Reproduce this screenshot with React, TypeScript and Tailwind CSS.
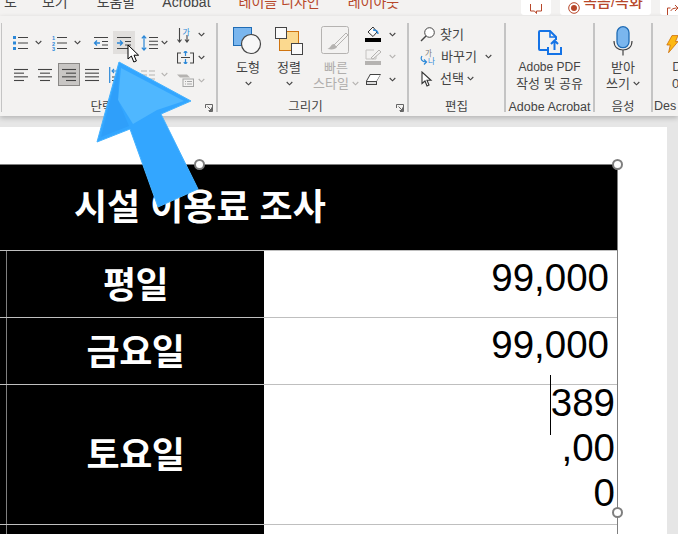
import type { ReactNode } from 'react';

const KR = "font-['Liberation_Sans','Noto_Sans_CJK_KR',sans-serif]";

const Chevron = ({ dim = false, className = '' }: { dim?: boolean; className?: string }) => (
    <svg width="7" height="5" viewBox="0 0 7 5" className={`shrink-0 ${className}`}>
        <path d="M.7 1l2.8 2.8L6.3 1" fill="none" stroke={dim ? '#b5b3b1' : '#444'} strokeWidth="1.1" />
    </svg>
);

const Lines = ({ rows, color = '#444' }: { rows: [number, number][]; color?: string }) => {
    const step = 11 / Math.max(rows.length - 1, 1);
    return (
        <>
            {rows.map(([a, b], i) => (
                <path key={i} d={`M${a} ${2.5 + i * step}H${b}`} stroke={color} strokeWidth="1.1" />
            ))}
        </>
    );
};

const Icon16 = ({ w = 16, children }: { w?: number; children: ReactNode }) => (
    <svg width={w} height="16" viewBox={`0 0 ${w} 16`} className="shrink-0">
        {children}
    </svg>
);

const Bullets = () => (
    <Icon16>
        <rect x="0" y="1" width="3" height="3" fill="#2b88d8" />
        <rect x="0" y="6.5" width="3" height="3" fill="#2b88d8" />
        <rect x="0" y="12" width="3" height="3" fill="#2b88d8" />
        <path d="M5 2.5h10M5 8h10M5 13.5h10" stroke="#444" strokeWidth="1.1" />
    </Icon16>
);

const Numbered = () => (
    <Icon16>
        <text x="0" y="5" fontSize="5.5" fontWeight="700" fill="#2b88d8" fontFamily="Liberation Sans">1</text>
        <text x="0" y="10.5" fontSize="5.5" fontWeight="700" fill="#2b88d8" fontFamily="Liberation Sans">2</text>
        <text x="0" y="16" fontSize="5.5" fontWeight="700" fill="#2b88d8" fontFamily="Liberation Sans">3</text>
        <path d="M5 2.5h10M5 8h10M5 13.5h10" stroke="#444" strokeWidth="1.1" />
    </Icon16>
);

const Outdent = () => (
    <Icon16>
        <path d="M1 2.5h14M9 6.5h6M9 10h6M1 13.5h14" stroke="#444" strokeWidth="1.1" />
        <path d="M7 8H1.5M4 5.5L1.5 8 4 10.5" fill="none" stroke="#2b88d8" strokeWidth="1.3" />
    </Icon16>
);

const Indent = () => (
    <Icon16>
        <path d="M1 2.5h14M9 6.5h6M9 10h6M1 13.5h14" stroke="#444" strokeWidth="1.1" />
        <path d="M1 8h5.5M4 5.5L6.5 8 4 10.5" fill="none" stroke="#2b88d8" strokeWidth="1.3" />
    </Icon16>
);

const LineSpacing = () => (
    <Icon16 w={18}>
        <path d="M3 1v14M.8 3.4L3 1l2.2 2.4M.8 12.6L3 15l2.2-2.4" fill="none" stroke="#2b88d8" strokeWidth="1.2" />
        <path d="M8 2.5h9M8 6.2h9M8 9.8h9M8 13.5h9" stroke="#444" strokeWidth="1.1" />
    </Icon16>
);

const Align = ({ rows }: { rows: [number, number][] }) => (
    <Icon16 w={15}>
        <Lines rows={rows} />
    </Icon16>
);

const Distribute = () => (
    <Icon16>
        <path d="M.7 0v16" stroke="#2b88d8" strokeWidth="1.2" />
        <path d="M8 4H3M5 2L3 4l2 2" fill="none" stroke="#2b88d8" strokeWidth="1.1" />
        <path d="M9 2.5h7M9 6h7M3 10h13M3 13.5h13" stroke="#444" strokeWidth="1.1" />
    </Icon16>
);

const Columns = () => (
    <svg width="14" height="10" viewBox="0 0 14 10" className="shrink-0">
        <path d="M0 1h6M8 1h6M0 5h6M8 5h6M0 9h6M8 9h6" stroke="#b5b3b1" strokeWidth="1.2" />
    </svg>
);

const TextDirection = () => (
    <svg width="16" height="16" viewBox="0 0 16 16" className="shrink-0">
        <path d="M2.5 1v14M.5 12.5l2 2.5 2-2.5M10 8v7M8 12.5l2 2.5 2-2.5" fill="none" stroke="#444" strokeWidth="1.1" />
        <text x="5.5" y="7.5" fontSize="8" fill="#2b88d8" fontFamily="Noto Sans CJK KR">가</text>
    </svg>
);

const AlignText = () => (
    <svg width="17" height="13" viewBox="0 0 17 13" className="shrink-0">
        <path d="M4 2H.5v10H4M13 2h3.5v10H13" fill="none" stroke="#444" strokeWidth="1.1" />
        <path d="M4 6.5h9" stroke="#444" strokeWidth="1" />
        <path d="M8.5 0v5M6.8 1.8L8.5 0l1.7 1.8M8.5 13V8M6.8 11.2L8.5 13l1.7-1.8" fill="none" stroke="#2b88d8" strokeWidth="1.2" />
    </svg>
);

const SmartArt = () => (
    <svg width="17" height="13" viewBox="0 0 17 13" className="shrink-0">
        <path d="M0 .5h10l3 3H3z" fill="#b5b3b1" />
        <rect x="6" y="5" width="10.5" height="7.5" fill="#f3f2f1" stroke="#a6a6a6" />
        <path d="M8 7.5h1M10 7.5h5M8 10h1M10 10h5" stroke="#a6a6a6" />
    </svg>
);

const ShapeIcon = () => (
    <svg width="30" height="29" viewBox="0 0 30 29">
        <rect x=".5" y=".5" width="18" height="18" fill="#7ab6ee" stroke="#1f6cb5" />
        <circle cx="18" cy="17" r="9.5" fill="#f7f7f7" stroke="#444" strokeWidth="1.2" />
    </svg>
);

const ArrangeIcon = () => (
    <svg width="29" height="29" viewBox="0 0 29 29">
        <rect x="4.5" y="4.5" width="19" height="19" fill="#fbd98f" stroke="#d0740f" />
        <rect x=".5" y=".5" width="11" height="11" fill="#fafafa" stroke="#444" />
        <rect x="16.5" y="16.5" width="11" height="11" fill="#fafafa" stroke="#444" />
    </svg>
);

const QuickStyleIcon = () => (
    <svg width="30" height="30" viewBox="0 0 30 30">
        <rect x=".5" y=".5" width="27" height="27" rx="2" fill="#f3f2f1" stroke="#b5b3b1" />
        <path d="M27 9L15 21l-2-2L25 7z" fill="#f3f2f1" stroke="#b5b3b1" />
        <path d="M13 18c-3 0-3 3-5 4-1 .6-2 1-1 1 4 1 8 0 9-2z" fill="#b5b3b1" />
    </svg>
);

const FillIcon = () => (
    <svg width="17" height="15" viewBox="0 0 17 15">
        <path d="M3 5l5-5 4 5-4 4.5z" fill="#fafafa" stroke="#333" />
        <path d="M13 7c0-3-2-4-5-4" fill="none" stroke="#2b88d8" strokeWidth="1.4" />
        <rect x="0" y="11" width="16" height="4" fill="#000" />
    </svg>
);

const PenIcon = () => (
    <svg width="17" height="16" viewBox="0 0 17 16">
        <path d="M1 1h8M1 1v9h10V6" fill="none" stroke="#c4c2c0" />
        <path d="M6 9l8-8 2 2-8 7z" fill="#f3f2f1" stroke="#b5b3b1" />
        <rect x="0" y="12" width="16" height="4" fill="#b5b3b1" />
    </svg>
);

const EffectIcon = () => (
    <svg width="17" height="13" viewBox="0 0 17 13">
        <path d="M1 8l4-7h11l-4 7v4H1z" fill="#444" />
        <path d="M2 8l3.5-6H15l-3.5 6z" fill="#fff" />
        <path d="M2 9h9v2H2z" fill="#ddd" />
    </svg>
);

const FindIcon = () => (
    <svg width="15" height="15" viewBox="0 0 15 15">
        <circle cx="9.5" cy="5.5" r="4.8" fill="#fff" stroke="#444" />
        <path d="M6 9L1 14" stroke="#444" strokeWidth="1.4" />
    </svg>
);

const ReplaceIcon = () => (
    <svg width="16" height="17" viewBox="0 0 16 17">
        <path d="M2 8c-2 3 0 6 4 6M4 11.5L6.5 14 4 16.5" fill="none" stroke="#2b88d8" strokeWidth="1.2" />
        <text x="5" y="7.5" fontSize="7.5" fill="#777" fontFamily="Noto Sans CJK KR">가</text>
        <text x="8" y="15.5" fontSize="7.5" fill="#2b88d8" fontFamily="Noto Sans CJK KR">나</text>
    </svg>
);

const SelectIcon = () => (
    <svg width="12" height="16" viewBox="0 0 12 16">
        <path d="M1 1v11.5l3-2.5 2 5 2-1-2-4.7h4z" fill="#fff" stroke="#333" strokeWidth="1.1" />
    </svg>
);

const PdfIcon = () => (
    <svg width="24" height="26" viewBox="0 0 24 26">
        <path d="M9 20H2a1 1 0 0 1-1-1V2a1 1 0 0 1 1-1h10l6 6v3" fill="none" stroke="#1473e6" strokeWidth="2" />
        <path d="M12 1v6h6" fill="none" stroke="#1473e6" strokeWidth="1.6" />
        <path d="M10 17v7h13v-7" fill="none" stroke="#1473e6" strokeWidth="2" />
        <path d="M16.5 20v-9M13 14l3.5-3.5L20 14" fill="none" stroke="#1473e6" strokeWidth="2" />
    </svg>
);

const MicIcon = () => (
    <svg width="20" height="30" viewBox="0 0 20 30">
        <rect x="4" y=".7" width="12" height="21" rx="6" fill="#7ab6ee" stroke="#1f6cb5" strokeWidth="1.3" />
        <path d="M1 15c0 6 4 9 9 9s9-3 9-9M10 24v5.5" fill="none" stroke="#444" strokeWidth="1.2" />
    </svg>
);

const BoltIcon = () => (
    <svg width="14" height="22" viewBox="0 0 14 22">
        <path d="M7 0h7l-3 7h3L3 20l2-9H1z" fill="#fdb913" stroke="#d0740f" strokeWidth="1" />
    </svg>
);

const Launcher = () => (
    <svg width="8" height="8" viewBox="0 0 8 8" className="shrink-0">
        <path d="M.5 4V.5h7v7H4M2.5 2.5l4 4M6.5 3.5v3h-3" fill="none" stroke="#555" strokeWidth=".9" />
    </svg>
);

const Group = ({ width, label, launcher, children }: { width: string; label: string; launcher?: boolean; children: ReactNode }) => (
    <div className={`flex h-[89px] flex-col border-r-2 border-[#c4c4c4] ${width}`}>
        <div className="min-h-0 flex-1">{children}</div>
        <div className={`relative flex h-[10px] shrink-0 items-center justify-center text-[12.5px] leading-none text-[#444] ${launcher ? 'pr-[14px]' : ''}`}>
            <span>{label}</span>
            {launcher && (
                <span className="absolute right-[3px] top-[2px]">
                    <Launcher />
                </span>
            )}
        </div>
    </div>
);

const StackTool = ({ icon, lines, dim = false, width }: { icon: ReactNode; lines: ReactNode[]; dim?: boolean; width: string }) => (
    <div className={`flex flex-col items-center ${width} ${dim ? 'text-[#b0aeac]' : 'text-[#444]'}`}>
        <div className="mb-[3px] flex h-[33px] items-end">{icon}</div>
        {lines.map((l, i) => (
            <div key={i} className="flex h-[16px] items-center gap-[3px] whitespace-nowrap text-[13px] leading-none">
                {l}
            </div>
        ))}
    </div>
);

const Handle = ({ className }: { className: string }) => (
    <div className={`absolute h-[11px] w-[11px] rounded-full border-2 border-[#7f7f7f] bg-white ${className}`} />
);

export default function App() {
    return (
        <div className={`relative h-[534px] w-[678px] overflow-hidden bg-[#e6e6e6] ${KR}`}>
            {/* clipped tab row */}
            <div className="flex h-[16px] items-start overflow-hidden bg-[#f3f2f1] text-[14px] leading-none text-[#444]">
                <div className="flex h-[9px] items-end whitespace-nowrap">
                    <span className="ml-[4px]">토</span>
                    <span className="ml-[25px]">보기</span>
                    <span className="ml-[29px]">도움말</span>
                    <span className="ml-[27px]">Acrobat</span>
                    <span className="ml-[28px] text-[#b7472a]">테이블 디자인</span>
                    <span className="ml-[28px] text-[#b7472a]">레이아웃</span>
                </div>
                <div className="ml-auto flex h-[15px] gap-[9px]">
                    <div className="flex h-[15px] w-[30px] items-end justify-center rounded-b-[3px] bg-white pb-[1px]">
                        <svg width="12" height="10" viewBox="0 0 12 10">
                            <path d="M.5 0v7h4l2 2.5V7h5V0" fill="none" stroke="#b7472a" />
                        </svg>
                    </div>
                    <div className="flex h-[15px] w-[91px] items-start justify-center gap-[3px] rounded-b-[3px] bg-white text-[#b7472a]">
                        <svg width="12" height="12" viewBox="0 0 12 12" className="mt-[2px]">
                            <circle cx="6" cy="6" r="5.3" fill="none" stroke="#b7472a" />
                            <circle cx="6" cy="6" r="3" fill="#b7472a" />
                        </svg>
                        <span className="flex h-[9px] items-end whitespace-nowrap text-[15px] font-medium">녹음/녹화</span>
                    </div>
                    <div className="flex h-[15px] w-[18px] items-end rounded-bl-[3px] bg-white pl-[7px]">
                        <svg width="11" height="10" viewBox="0 0 11 10">
                            <path d="M.5 10V3h3M8 0l3 3-3 3M4 6c0-2 3-3 7-3" fill="none" stroke="#b7472a" />
                        </svg>
                    </div>
                </div>
            </div>

            {/* ribbon */}
            <div className="flex h-[100px] items-start bg-[#f3f2f1] pt-[7px] shadow-[0_2px_5px_rgba(0,0,0,0.22)]">
                <div className="ml-[1px] h-[89px] w-[1px] shrink-0 bg-[#c4c4c4]" />
                <Group width="w-[216px] shrink-0" label="단락" launcher>
                    <div className="flex">
                        <div className="flex w-[173px] shrink-0 flex-col gap-[9px] pt-[8px]">
                            <div className="flex h-[23px] items-center pl-[11px]">
                                <Bullets />
                                <Chevron className="ml-[6px]" />
                                <span className="ml-[10px]"><Numbered /></span>
                                <Chevron className="ml-[6px]" />
                                <span className="ml-[12px]"><Outdent /></span>
                                <span className="ml-[4px] flex h-[23px] w-[22px] items-center justify-center bg-[#e1dfdd]"><Indent /></span>
                                <span className="ml-[6px]"><LineSpacing /></span>
                                <Chevron className="ml-[2px]" />
                            </div>
                            <div className="flex h-[23px] items-center pl-[12px]">
                                <Align rows={[[0, 14], [0, 10], [0, 14], [0, 10]]} />
                                <span className="ml-[9px]"><Align rows={[[0, 14], [2, 12], [0, 14], [2, 12]]} /></span>
                                <span className="ml-[5px] flex h-[23px] w-[22px] items-center justify-center border border-[#8a8886] bg-[#c8c6c4]">
                                    <Align rows={[[0, 14], [4, 14], [0, 14], [4, 14]]} />
                                </span>
                                <span className="ml-[5px]"><Align rows={[[0, 14], [0, 14], [0, 14], [0, 14]]} /></span>
                                <span className="ml-[9px]"><Distribute /></span>
                                <span className="ml-[16px]"><Columns /></span>
                                <Chevron dim className="ml-[6px]" />
                            </div>
                        </div>
                        <div className="flex flex-col pl-[2px]">
                            <div className="flex h-[23px] items-center gap-[5px]"><TextDirection /><Chevron /></div>
                            <div className="flex h-[23px] items-center gap-[4px]"><AlignText /><Chevron /></div>
                            <div className="flex h-[23px] items-center gap-[4px]"><SmartArt /><Chevron dim /></div>
                        </div>
                    </div>
                </Group>

                <Group width="w-[191px] shrink-0" label="그리기" launcher>
                    <div className="flex pl-[14px]">
                        <StackTool width="w-[32px]" icon={<ShapeIcon />} lines={['도형', <Chevron key="c" />]} />
                        <StackTool width="w-[32px] ml-[9px]" icon={<ArrangeIcon />} lines={['정렬', <Chevron key="c" />]} />
                        <StackTool
                            width="w-[44px] ml-[9px]"
                            dim
                            icon={<QuickStyleIcon />}
                            lines={['빠른', <><span key="t">스타일</span><Chevron dim key="c" /></>]}
                        />
                        <div className="ml-[7px] flex flex-col">
                            <div className="flex h-[22px] items-center gap-[7px]"><FillIcon /><Chevron /></div>
                            <div className="flex h-[23px] items-center gap-[7px]"><PenIcon /><Chevron dim /></div>
                            <div className="flex h-[23px] items-center gap-[7px]"><EffectIcon /><Chevron /></div>
                        </div>
                    </div>
                </Group>

                <Group width="w-[97px] shrink-0" label="편집">
                    <div className="flex flex-col pl-[11px] text-[13px] leading-none text-[#444]">
                        <div className="flex h-[22px] items-center gap-[5px]"><FindIcon /><span>찾기</span></div>
                        <div className="flex h-[22px] items-center gap-[5px]"><ReplaceIcon /><span>바꾸기</span><Chevron className="ml-[3px]" /></div>
                        <div className="flex h-[23px] items-center gap-[7px] pl-[1px]"><SelectIcon /><span>선택</span><Chevron className="-ml-[4px]" /></div>
                    </div>
                </Group>

                <Group width="w-[89px] shrink-0" label="Adobe Acrobat">
                    <StackTool width="w-full" icon={<PdfIcon />} lines={[<span key="a" className="text-[12px]">Adobe PDF</span>, '작성 및 공유']} />
                </Group>

                <Group width="w-[58px] shrink-0" label="음성">
                    <StackTool width="w-full" icon={<MicIcon />} lines={['받아', <><span key="t">쓰기</span><Chevron key="c" /></>]} />
                </Group>

                <div className="flex h-[89px] flex-col overflow-hidden pl-[13px] text-[13px] leading-none text-[#444]">
                    <div className="mb-[3px] flex h-[33px] items-end"><BoltIcon /></div>
                    <div className="flex h-[16px] items-center pl-[6px]">디</div>
                    <div className="flex h-[16px] items-center pl-[6px]">0</div>
                    <div className="-ml-[13px] flex h-[21px] items-end pl-[1px] text-[12.5px]">Des</div>
                </div>
            </div>

            {/* slide */}
            <div className="pr-[11px] pt-[11px]">
                <div className="h-[420px] overflow-hidden bg-white pt-[37px]">
                    <div className="w-[618px] border-r border-t border-[#7f7f7f] text-white">
                        <div className="flex h-[85px] items-center bg-black pl-[74px] text-[36px] leading-none font-bold">
                            시설 이용료 조사
                        </div>
                        <Row h="h-[67px]" label="평일" value={<div className="pr-[8px]">99,000</div>} />
                        <Row h="h-[67px]" label="금요일" value={<div className="pr-[8px]">99,000</div>} />
                        <Row
                            h="h-[140px]"
                            label="토요일"
                            value={
                                <div className="mb-[4px] pr-[2px] leading-[45px]">
                                    <div>389</div>
                                    <div>,00</div>
                                    <div>0</div>
                                </div>
                            }
                        />
                        <Row h="h-[40px]" label="" value={null} />
                    </div>
                </div>
            </div>

            {/* selection overlays */}
            <Handle className="left-[194px] top-[159px]" />
            <Handle className="left-[612px] top-[159px]" />
            <Handle className="left-[612px] top-[507px]" />
            <div className="absolute left-[550px] top-[375px] h-[60px] w-[1px] bg-black" />

            {/* big callout arrow */}
            <svg width="678" height="534" viewBox="0 0 678 534" className="absolute left-0 top-0">
                <polygon points="119,62 191,101 161,114 198,189 158,207 130,129 97,142" fill="#33a6ff" stroke="#45b2ff" strokeWidth="1" />
                <polygon points="121,68 184,101 157,110 133,124 118,100" fill="#4fb7ff" />
                <polygon points="119,66 101,137 129,126 118,100" fill="#2f9ffa" />
            </svg>

            {/* mouse pointer */}
            <svg width="14" height="20" viewBox="0 0 14 20" className="absolute left-[127px] top-[44px]">
                <path d="M1 1v14l3.4-3 2.4 6 2.6-1-2.4-5.8h4.6z" fill="#fff" stroke="#000" strokeWidth="1" />
            </svg>
        </div>
    );
}

function Row({ h, label, value }: { h: string; label: string; value: ReactNode }) {
    return (
        <div className={`flex border-t border-[#bfbfbf] ${h}`}>
            <div className="w-[7px] shrink-0 border-r border-[#7f7f7f] bg-black" />
            <div className="flex w-[257px] shrink-0 items-center justify-center bg-black pt-[3px] text-[36px] leading-none font-bold tracking-[-0.5px]">
                {label}
            </div>
            <div className="flex flex-1 items-center justify-end bg-white pb-[11px] font-['Liberation_Sans',sans-serif] text-[38.5px] leading-none text-black">
                <div className="text-right">{value}</div>
            </div>
        </div>
    );
}
